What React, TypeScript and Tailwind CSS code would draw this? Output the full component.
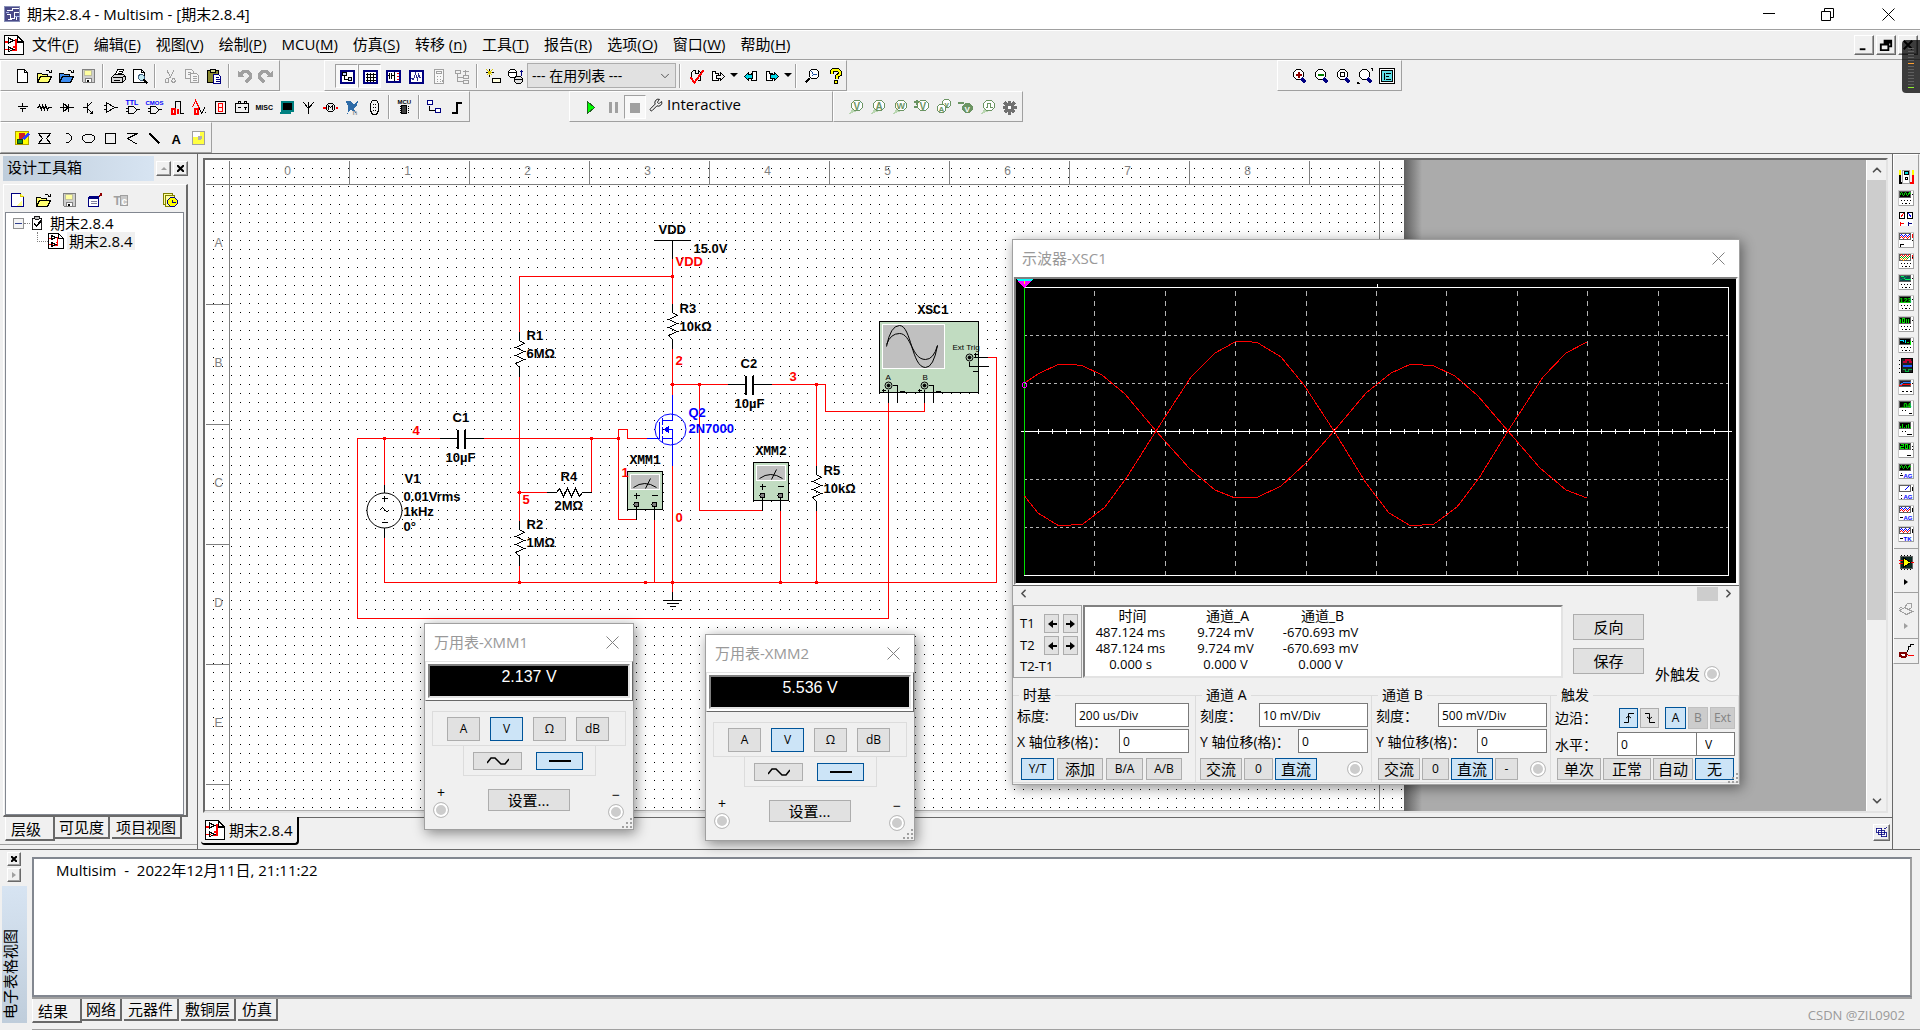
import type { ReactNode } from "react";
import { ChevronDown, ChevronLeft, ChevronRight, ChevronUp, Wrench } from "lucide-react";
import clsx from "clsx";

type PathShape = [d: string, stroke?: string, fill?: string, width?: number];
type TextShape = { text: string; x: number; y: number; fill: string; size: number };
type Shape = PathShape | TextShape;

const K = "#000000";
const G = "#a0a0a0";
const N = "#000080";
const R = "#ff0000";
const PROBE = "#6b9463";

const magnifier = (inner: Shape[]): Shape[] => [
  ["M5 1H9L12 4V8L9 11H5L2 8V4Z", K, "#ffffff"],
  ["M10 10L14 14", N, "none", 3],
  ...inner,
];

const probe = (label: string): Shape[] => [
  ["M1 15L6 8L8 12Z", "none", "#b9d6b1"],
  ["M7 1H12L15 4V8L12 11H7L4 8V4Z", PROBE, "#ffffff"],
  { text: label, x: 6, y: 10, fill: PROBE, size: 10 },
];

const folder = (fill: string): Shape[] => [
  ["M1 14V5H5L6 6H11V8", K, fill],
  ["M1 14L4 8H15L12 14Z", K, fill],
  ["M9 3L10 2H12L14 4M15 1V4H12", K],
];

const instrument = (screen: string, waves: PathShape[], dots: string, label?: Shape): Shape[] => [
  ["M0 0H14V14H0Z", "none", "#ffffff"],
  ["M15 0V15H0", G],
  ["M0 15V0H15", "#c8c8c8"],
  ["M1 1H12V7H1Z", "#606060", screen],
  ...waves,
  [dots, K],
  ...(label ? [label] : []),
];

const DOTS = "M2 10H3M5 10H6M8 10H9M11 10H12M3 13H4M6 13H8M10 13H11M14 3V4";
const ZIG = "M1 5L3 2L5 5L7 2L9 5L11 2L12 4";
const BLUE_WAVE = "M1 4L3 2L5 4L7 2L9 4L11 2";
const RED_WAVE = "M1 6L3 4L5 6L7 4L9 6L11 4";

const ICONS: Record<string, Shape[]> = {
  app: [
    ["M0 0H15V15H0Z", "#8890b8", "#4a4a88"],
    ["M2 4H8V2H14M2 8H6V12H10V6H14M3 13H7M12 13V9", "#ffffff"],
    ["M1 6H4M10 10H15", "#a8b8e8"],
  ],
  sheet: [
    ["M0 0H10L15 5V15H0Z", K, "#ffffff"],
    ["M10 0V5H15", K],
    ["M0 5H3M0 11H4M7 9H9V3M9 9V12H6", R],
    ["M3 2V6L7 4ZM3 9V13L7 11Z", K],
  ],
  new: [["M3 1H10L13 4V14H3Z", K, "#ffffff"], ["M10 1V4H13", K]],
  open: folder("#ffff70"),
  openBlue: folder("#3c8cf0"),
  save: [
    ["M2 1H14V14H3L2 13Z", "#808080", "#d0d0d0"],
    ["M4 2H11V7H4Z", "#c0c0a0", "#ffffa0"],
    ["M5 10H11V14H5Z", "#808080", "#ffffff"],
    ["M7 11V13", K, "none", 2],
  ],
  print: [
    ["M5 6L7 1H13L11 6", K, "#ffffff"],
    ["M1 9L4 6H13L15 8V11L12 14H1Z", K, "#d8d8d8"],
    ["M2 9H12L15 7M12 9V14M3 12H9M8 3H11M7 5H10", K],
  ],
  preview: [
    ["M1 1H9L12 4V14H1Z", K, "#ffffff"],
    ["M9 1V4H12", K],
    ["M7 6H10L12 8V10L10 12H8L6 10V8Z", "#406080", "#c0e8f0"],
    ["M11 11L15 15", K, "none", 2],
  ],
  cut: [["M5 1V3L9 10M11 1V3L7 10", G], ["M4 10H6V14H3V11ZM10 10H12L13 13L11 14L9 13Z", G]],
  copy: [
    ["M1 1H7L9 3V10H1Z", G, "#f4f4f4"],
    ["M6 5H12L14 7V14H6Z", G, "#f4f4f4"],
    ["M3 4H6M3 6H5M8 8H12M8 10H12M8 12H12", G],
  ],
  paste: [
    ["M1 2H12V14H1Z", K, "#8a8a30"],
    ["M4 1H9V4H4Z", K, "#d8d890"],
    ["M7 6H12L14 8V15H7Z", N, "#ffffff"],
    ["M9 9H12M9 11H13M9 13H13", N],
  ],
  undo: [["M1 2V8H7Z", "none", G], ["M4 6L7 3H11L14 6V9L9 14", G, "none", 3]],
  redo: [["M14 2V8H8Z", "none", G], ["M11 6L8 3H4L1 6V9L6 14", G, "none", 3]],
  hierarchy: [
    ["M1 2H14V14H1Z", N, "#ffffff", 2],
    ["M3 4H7V7H3ZM9 9H12V12H9Z", K, "#c8d8ff"],
    ["M5 7V11H9", K],
  ],
  grid: [["M1 2H14V14H1Z", N, "#ffffff", 2], ["M3 6H13M3 9H13M3 12H13M5 4V13M8 4V13M11 4V13", K]],
  netlist: [
    ["M1 2H14V13H1Z", N, "#ffffff", 2],
    ["M2 7H4M4 4V10M6 4V10M6 7H8M9 3V12", K],
    ["M11 5H13M11 8H13M11 11H13", R],
  ],
  grapher: [["M1 2H14V14H1Z", N, "#ffffff", 2], ["M3 10L5 11L7 5L9 11L10 6L12 10", "#303090"]],
  calc: [
    ["M3 1H12V15H3Z", G, "#f8f8f8"],
    ["M5 3H10V5H5Z", G],
    ["M5 8H6M8 8H9M11 8H12M5 11H6M8 11H9M5 13H6M8 13H9M11 11V13", G],
  ],
  tree: [["M1 2H6V5H1ZM9 7H14V10H9ZM9 12H14V15H9ZM3 5V13H9M3 9H9M8 3H14M11 1V6", G]],
  createPart: [
    ["M4 0V8M0 4H8M1 1L7 7M7 1L1 7", "#d8c800"],
    ["M4 0V2M0 4H2M6 4H8M4 6V8", K],
    ["M7 10H15V14H7Z", K, "#ffffe0"],
  ],
  database: [
    ["M2 1H6L8 3V7L6 9H2L0 7V3Z", K, "#ffffff"],
    ["M0 4H8", K],
    ["M8 8H12L14 10V13L12 15H8L6 13V10Z", K, "#e0e0e0"],
    ["M6 11H14", K],
    ["M13 7V2M11 4L13 2L15 4", N],
  ],
  erc: [["M3 11V4L5 2H7V5H10V2L12 4V12H9", K], ["M2 9L6 14L15 2", R, "none", 2]],
  exportOut: [["M1 3H4V5H7V12H1Z", K, "#ffffff"], ["M5 7H9V4L13 8L9 12V10H5Z", K, "#f0f0f0"]],
  backAnnotate: [["M10 3H14V12H9V5H10Z", K, "#ffffff"], ["M10 6H6V4L2 8L6 12V10H10Z", K, "#00d8e8"]],
  forwardAnnotate: [["M1 3H4V5H7V12H1Z", K, "#ffffff"], ["M5 6H9V4L13 8L9 12V10H5Z", K, "#00d8e8"]],
  find: [
    ["M7 1H12L14 3V8L12 10H7L5 8V3Z", K, "#ffffff"],
    ["M7 3L9 6L7 8M9 6H12", "#2050a0"],
    ["M5 10L1 14", K, "none", 2],
  ],
  help: [
    ["M4 5V3L6 1H10L12 3V6L9 8V10", K, "none", 4],
    ["M4 5V3L6 1H10L12 3V6L9 8V10", "#ffff00", "none", 2],
    ["M7 12H10V15H7Z", K, "#ffff00"],
  ],
  zoomIn: magnifier([["M7 3V9M4 6H10", "#900000", "none", 2]]),
  zoomOut: magnifier([["M4 6H10", "#008000", "none", 2]]),
  zoomArea: magnifier([["M5 4H9V8H5Z", K]]),
  zoomFit: magnifier([["M13 0H15V2M0 13V15H2", K, K]]),
  fullScreen: [
    ["M0 0H15V15H0Z", K, "#ffffff"],
    ["M2 2H13V13H2Z", K, "#60e0e8"],
    ["M5 4V11M6 5H11M6 8H9M6 11H11", K],
  ],
  source: [["M3 7H13M5 9H11M8 3V7M8 9V12", K]],
  resistor: [["M0 8H2L3 6L5 10L6 6L8 10L9 6L11 10L12 8H15", K]],
  diode: [["M1 8H15M5 4V12M10 4V12M5 4L10 8L5 12", K]],
  transistor: [["M2 8H7M7 3V13M7 7L11 3M7 9L12 14M12 11V14H9", K]],
  opamp: [["M4 3V13L12 8ZM1 6H4M1 10H4M12 8H15", K]],
  ttl: [{ text: "TTL", x: 1, y: 5, fill: "#0000ff", size: 7 }, ["M4 7H9L12 10V11L9 14H4ZM1 9H4M1 12H4M12 10H15", K]],
  cmos: [{ text: "CMOS", x: -1, y: 5, fill: "#0000ff", size: 6 }, ["M4 7H9L12 10V11L9 14H4ZM1 9H4M1 12H4M12 10H15", K]],
  digital: [["M3 9H6V14H3ZM9 9V14", R, "none", 2], ["M7 8V2H12V14M12 14H15", K]],
  mixed: [["M2 8L5 1L9 9", R], ["M4 9H7V14H4Z", R, "none", 2], ["M9 9L11 14L14 9V7M14 13H15", K]],
  indicator: [["M3 2H13V14H3Z", K, "#fff0f0"], ["M6 4H10V8H6ZM6 8H10V12H6Z", R]],
  power: [["M1 4H14V13H1ZM4 2H6V4H4ZM10 2H12V4H10ZM3 8H6M9 8H12M11 7V10", K]],
  misc: [{ text: "MISC", x: -1, y: 10, fill: K, size: 7 }],
  peripheral: [["M3 2H14V11H3Z", "#008080", K, 2], ["M1 13H12", "#008080", "none", 2]],
  rf: [["M8 2V14M8 9L3 3M8 9L13 3", K]],
  motor: [["M6 4H10L12 6V10L10 12H6L4 10V6Z", K], ["M0 8H3M13 8H15", R, "none", 2], ["M6 10V6L8 8L10 6V10", K]],
  ni: [["M1 1L6 2L9 5L14 1L12 7L9 9L11 13L6 10L3 14L4 8Z", "none", "#2e6ca8"], { text: "n", x: 8, y: 15, fill: G, size: 8 }],
  connector: [["M6 1H10L12 4V11L10 15H6L4 11V4ZM7 4V5M9 4V5M7 7V8M9 7V8M7 10V11M9 10V11", K]],
  mcu: [
    { text: "MCU", x: 1, y: 4, fill: K, size: 6 },
    ["M5 6H10V14H5Z", K, "#404040"],
    ["M3 7H4M3 9H4M3 11H4M3 13H4M11 7H12M11 9H12M11 11H12M11 13H12", K],
  ],
  hierBlock: [["M1 1H6V5H1ZM9 9H14V13H9Z", N, "#ffffff"], ["M3 6V11H8", K]],
  bus: [["M3 13H8V3H13", K, "none", 2]],
  play: [["M4 2L11 8L4 14Z", "#206020", "#00ff00"]],
  pause: [["M4 3H6V13H4ZM10 3H12V13H10Z", G, G]],
  stop: [["M3 4H12V13H3Z", G, G]],
  probeV: probe("V"),
  probeA: probe("A"),
  probeW: [...probe(""), { text: "W", x: 5, y: 9, fill: PROBE, size: 9 }],
  probeDiff: [["M0 2H6M3 0V5M0 7H6", PROBE, "none", 2], ...probe("V").slice(1)],
  probeVA: [
    ["M9 0H13L15 2V6L13 8H9L7 6V2Z", PROBE, "#ffffff"],
    ["M4 5H8L10 7V11L8 13H4L2 11V7Z", PROBE, "#ffffff"],
    { text: "A", x: 3, y: 12, fill: PROBE, size: 8 },
    { text: "v", x: 9, y: 7, fill: PROBE, size: 8 },
  ],
  probeRef: [["M0 3H6", PROBE, "none", 2], ["M8 4H12L15 7V10L12 13H8L5 10V7Z", PROBE, PROBE], { text: "V", x: 7, y: 12, fill: "#ffffff", size: 8 }],
  probeDigital: [...probe(""), ["M6 8H8V4H11V8H13", PROBE]],
  gear: [
    ["M8 1V15M1 8H15M3 3L13 13M13 3L3 13", "#707070", "none", 3],
    ["M5 4H11L12 8L11 12H5L4 8Z", "none", "#707070"],
    ["M7 7H9V9H7Z", "#ffffff", "#ffffff"],
  ],
  annotate: [
    ["M1 1H14V14H1Z", "#b0a000", "#ffff00"],
    ["M4 2H10V8H4Z", "none", "#d02020"],
    ["M9 9L14 3", "#3040ff", "none", 3],
    ["M3 9H8V13H3Z", "#104010", "#109030"],
  ],
  polyShape: [["M2 3H14L10 8L14 13H2L6 8Z", K]],
  arc: [["M7 3H10L13 6V9L10 12H7", K]],
  ellipse: [["M5 4H11L14 6V9L11 12H5L2 9V6Z", K]],
  rect: [["M3 3H13V13H3Z", K]],
  polyline: [["M2 3H13L3 8L13 14", K]],
  line: [["M3 3L13 13", K, "none", 2]],
  text: [{ text: "A", x: 3, y: 13, fill: K, size: 13 }],
  note: [["M2 1H14V14H2Z", G, "#ffff40"], ["M2 1H9V6H2Z", "none", "#ffffff"], ["M7 7H11M9 5V9", "#b0b0b0", "none", 3]],
  projNew: [["M2 1H11L14 4V14H2Z", N, "#ffffff"], ["M11 1V4H14", "#d8c800", "#ffff60"], ["M12 8V13H7Z", "none", "#ffff90"]],
  closeSheet: [["M1 5H11V14H1Z", N, "#ffffff"], ["M1 5H11", N, "none", 3], ["M3 9H9M3 11H9", "#8080a0"], ["M11 5L14 1M12 1H14V3", "#900000"]],
  rename: [{ text: "T", x: 0, y: 12, fill: G, size: 12 }, ["M7 3H14V13H7Z", G, "#c8c8c8"], { text: "c", x: 8, y: 12, fill: "#ffffff", size: 10 }],
  history: [
    ["M1 1H10V12H1Z", "#808000", "#ffffa0"],
    ["M3 3H12V14H3Z", "#808000", "#ffffa0"],
    ["M8 5H12L15 8V11L12 14H8L5 11V8Z", N, "#ffff00"],
    ["M10 7V10H13", N],
  ],
  clipboard: [["M2 2H13V15H2Z", K, "#ffffff"], ["M5 0H10V3H5Z", K, "#c0c0c0"], ["M4 8L7 11L12 5", K, "none", 2]],
  cascade: [["M1 2H8V7H1ZM4 5H11V10H4ZM7 8H14V13H7Z", N, "#ffffff"], ["M10 4L14 1", N]],
  multimeter: [
    ["M1 0V5M14 0V5", "#ffff00", "none", 2],
    ["M1 5V13H4", K, "none", 2],
    ["M14 5V13H11", R, "none", 2],
    ["M4 1H11V14H4Z", G, "#ffffff"],
    ["M6 2H10V5H6Z", K, "#00e0e0"],
    ["M7 8H9V10H7Z", K],
  ],
  functionGen: instrument(K, [[ZIG, "#00d000"]], DOTS),
  wattmeter: [
    ["M0 0H14V14H0Z", "none", "#ffffff"],
    ["M1 7V1H6V7ZM9 7V1H14V7Z", K, "#ffffff"],
    ["M2 6L5 2", R],
    ["M10 2L13 6", "#0000ff"],
    ["M1 12H5M2 10V14", R],
    ["M9 12H13M10 10V14", N],
  ],
  scope2: instrument("#ffffff", [[BLUE_WAVE, "#0000ff"], [RED_WAVE, R], ["M14 1V5", R]], "M1 12H5M2 11V14M14 7V8"),
  scope4: instrument("#ffffff", [["M1 3L3 1L5 3L7 1L9 3L11 1", R], ["M1 5L3 3L5 5L7 3L9 5L11 3", "#00b000"], ["M1 7L3 5L5 7L7 5L9 7", "#ff9000"], ["M14 1V5", R]], DOTS),
  bode: instrument("#104848", [["M2 2H5L7 5H12", "#00ff60"], ["M2 5L9 2", "#008060"]], DOTS),
  freq: instrument(K, [], DOTS, { text: "123", x: 1, y: 7, fill: "#00e000", size: 7 }),
  wordGen: instrument(K, [["M2 2V6M4 2H6V6H4ZM8 2V6M10 2V6", "#00e000"]], DOTS),
  logicConv: instrument(K, [["M1 3H4L6 4M7 2V5", "#00e0ff"], ["M8 5H10M12 3V7", "#00e000"]], DOTS),
  logicAn: [
    ["M3 0H14V14H3Z", K, "#202020"],
    ["M4 3H7V1H11V3H13", "#c00030", "none", 2],
    ["M4 7H13", "#2060ff", "none", 2],
    ["M4 11H7V13H10V11H13", "#00b040"],
    ["M1 1V2M1 5V6M1 9V10M1 13V14", K],
  ],
  iv: instrument("#202030", [["M1 6L5 3H12", "#3080ff"], ["M1 6L6 5H12", R]], "M3 12H5M7 12H9M11 12H13M14 3V4"),
  distortion: instrument(K, [], "M3 10H4M6 10H7M10 13H13", { text: ".04", x: 3, y: 7, fill: "#00e000", size: 7 }),
  spectrum: instrument(K, [["M2 4V6M4 2V6M6 5V6M8 3V6M10 2V6M12 5V6", "#00e000"]], "M3 10H4M6 10H7M8 13H13"),
  network: instrument(K, [["M2 2H5V4H2V6H5M7 2H9V6H7ZM11 2V6", "#00e000"]], "M8 13H12M14 3V4M14 6V7"),
  agGen: instrument(K, [[ZIG, "#00d000"]], "M2 10H3M1 12H4", { text: "AG", x: 5, y: 14, fill: "#0000ff", size: 6 }),
  agMeter: instrument("#ffffff", [["M6 6L10 2", "#0000ff"]], "M3 10V11M3 13V14M14 2V6", { text: "AG", x: 5, y: 14, fill: "#0000ff", size: 6 }),
  agScope: instrument("#ffffff", [[BLUE_WAVE, "#0000ff"], [RED_WAVE, R]], "M1 12H4M14 2V6", { text: "AG", x: 5, y: 14, fill: "#0000ff", size: 6 }),
  tkScope: instrument("#ffffff", [[BLUE_WAVE, "#0000ff"], [RED_WAVE, R]], "M1 12H4M14 2V6", { text: "TK", x: 5, y: 14, fill: "#0000ff", size: 6 }),
  labview: [
    ["M2 1H14V13H2Z", "#606060", "#082820"],
    ["M0 5H4M0 8H4", R],
    ["M5 2V12L12 7Z", K, "#ffff00"],
    ["M12 7H15", R],
    ["M2 14H3M5 14H6M8 14H9M11 14H12M2 0H3M5 0H6M8 0H9M11 0H12", K],
  ],
  elvis: [["M1 9L6 6L14 10L8 13ZM6 6L9 2H13V6L10 8M1 7L4 5", G]],
  currentProbe: [["M3 9H7L8 11L7 13H3L1 12V10Z", "#800000", "#ffffff", 2], ["M8 9L10 6V3H12V1H15", K], ["M9 12H15", R]],
};

const Icon = ({ name, size = 16 }: { name: string; size?: number }) => (
  <svg viewBox="0 0 16 16" width={size} height={size} shapeRendering="crispEdges" className="shrink-0 overflow-visible" aria-hidden="true">
    <g transform="translate(.5 .5)">
      {ICONS[name].map((s, i) =>
        Array.isArray(s) ? (
          <path key={i} d={s[0]} stroke={s[1] ?? "none"} fill={s[2] ?? "none"} strokeWidth={s[3] ?? 1} />
        ) : (
          <text key={i} x={s.x} y={s.y} fill={s.fill} fontSize={s.size} fontWeight="700" fontFamily="Liberation Sans, sans-serif">
            {s.text}
          </text>
        )
      )}
    </g>
  </svg>
);

const Toolbar = ({ children, className }: { children: ReactNode; className?: string }) => (
  <div className={clsx("flex h-[31px] items-center border border-t-white border-l-white border-r-[#a0a0a0] border-b-[#a0a0a0] pl-2.5", className)}>
    {children}
  </div>
);

const Tool = ({ name, wide, pressed }: { name: string; wide?: boolean; pressed?: boolean }) => (
  <button
    aria-label={name}
    className={clsx(
      "flex h-6 shrink-0 items-center justify-center",
      wide ? "w-[23px]" : "w-[22px]",
      pressed && "border border-t-[#a0a0a0] border-l-[#a0a0a0] border-r-white border-b-white bg-[#f8f8f8]"
    )}
  >
    <Icon name={name} />
  </button>
);

const Sep = () => <span className="mx-[3px] h-6 w-0.5 shrink-0 border-l border-r border-l-[#a0a0a0] border-r-white" />;

const Caret = () => (
  <svg width="8" height="5" viewBox="0 0 8 5" className="shrink-0" aria-hidden="true">
    <path d="M0 0H8L4 4Z" />
  </svg>
);

const MENUS: [string, string][] = [
  ["文件(", "F"], ["编辑(", "E"], ["视图(", "V"], ["绘制(", "P"], ["MCU(", "M"], ["仿真(", "S"],
  ["转移 (", "n"], ["工具(", "T"], ["报告(", "R"], ["选项(", "O"], ["窗口(", "W"], ["帮助(", "H"],
];

const PLACE_TOOLS = [
  "source", "resistor", "diode", "transistor", "opamp", "ttl", "cmos", "digital", "mixed",
  "indicator", "power", "misc", "peripheral", "rf", "motor", "ni", "connector",
];

const INSTRUMENTS = [
  "multimeter", "functionGen", "wattmeter", "scope2", "scope4", "bode", "freq", "wordGen", "logicConv",
  "logicAn", "iv", "distortion", "spectrum", "network", "agGen", "agMeter", "agScope", "tkScope",
];

const RAISED = "border border-t-white border-l-white border-r-[#696969] border-b-[#696969] shadow-[inset_-1px_-1px_0_#a0a0a0]";

const TitleBar = () => (
  <header className="flex h-[30px] shrink-0 items-center border-b border-[#a0a0a0] bg-white pb-px pl-1">
    <Icon name="app" />
    <h1 className="ml-[7px] text-[15px]">期末2.8.4 - Multisim - [期末2.8.4]</h1>
    <div className="ml-auto flex">
      <button aria-label="最小化" className="flex h-7 w-[58px] items-center justify-center">
        <svg width="12" height="12" viewBox="0 0 12 12"><path d="M0 5.5H12" stroke="#000" /></svg>
      </button>
      <button aria-label="还原" className="flex h-7 w-[58px] items-center justify-center">
        <svg width="13" height="13" viewBox="0 0 13 13" fill="none" stroke="#000"><path d="M.5 3.5H9.5V12.5H.5ZM3.5 3V.5H12.5V9.5H10" /></svg>
      </button>
      <button aria-label="关闭" className="flex h-7 w-16 items-center justify-center">
        <svg width="13" height="13" viewBox="0 0 13 13" stroke="#000"><path d="M.5 .5L12.5 12.5M12.5 .5L.5 12.5" /></svg>
      </button>
    </div>
  </header>
);

const MenuBar = () => (
  <nav className="flex h-[30px] shrink-0 items-center border-t border-b border-t-white border-b-[#a0a0a0] pl-1 text-[15px]">
    <Icon name="sheet" size={20} />
    <div className="ml-2 flex gap-[15px] pb-0.5">
      {MENUS.map(([label, key]) => (
        <button key={label} className="leading-5 whitespace-pre">
          {label}<u className="underline-offset-2">{key}</u>)
        </button>
      ))}
    </div>
    <div className="ml-auto flex gap-0.5 pr-0.5">
      {["M4 13H10", "M6 4H14V10H12M3 8H11V14H3ZM6 6H14", "M4 4L13 13M13 4L4 13"].map((d) => (
        <button key={d} aria-label="文档窗口" className={clsx("flex h-5 w-5 items-center justify-center", RAISED)}>
          <svg width="16" height="16" viewBox="0 0 17 17" fill="none" stroke="#000" strokeWidth="2"><path d={d} /></svg>
        </button>
      ))}
    </div>
  </nav>
);

const Toolbars = () => (
  <div className="shrink-0 border-b border-[#696969]">
    <div className="flex">
      <Toolbar className="pr-0.5">
        {["new", "open", "openBlue", "save"].map((n) => <Tool key={n} name={n} />)}
        <Sep />
        {["print", "preview"].map((n) => <Tool key={n} name={n} />)}
        <Sep />
        {["cut", "copy", "paste"].map((n) => <Tool key={n} name={n} />)}
        <Sep />
        {["undo", "redo"].map((n) => <Tool key={n} name={n} />)}
      </Toolbar>
      <Toolbar className="ml-11">
        <Tool name="hierarchy" wide pressed />
        <Tool name="grid" wide pressed />
        {["netlist", "grapher", "calc", "tree"].map((n) => <Tool key={n} name={n} wide />)}
        <Sep />
        {["createPart", "database"].map((n) => <Tool key={n} name={n} wide />)}
        <div className="relative">
          <select aria-label="在用列表" className="h-[25px] w-[149px] appearance-none border border-[#adadad] bg-[#e1e1e1] px-1 text-[14px]">
            <option>--- 在用列表 ---</option>
          </select>
          <ChevronDown size={14} strokeWidth={1.5} className="pointer-events-none absolute top-1.5 right-1 text-[#404040]" />
        </div>
        <Sep />
        <Tool name="erc" wide />
        <Tool name="exportOut" wide />
        <Caret />
        <Tool name="backAnnotate" wide />
        <Tool name="forwardAnnotate" wide />
        <Caret />
        <Sep />
        <Tool name="find" wide />
        <Tool name="help" wide />
      </Toolbar>
      <Toolbar className="mr-[518px] ml-auto pr-[3px]">
        {["zoomIn", "zoomOut", "zoomArea", "zoomFit", "fullScreen"].map((n) => <Tool key={n} name={n} />)}
      </Toolbar>
    </div>
    <div className="flex">
      <Toolbar className="pr-0.5">
        {PLACE_TOOLS.map((n) => <Tool key={n} name={n} />)}
        <Sep />
        <Tool name="mcu" />
        <Sep />
        <Tool name="hierBlock" />
        <Tool name="bus" />
      </Toolbar>
      <Toolbar className="ml-[99px] w-[264px]">
        <Tool name="play" />
        <Tool name="pause" />
        <Tool name="stop" pressed />
        <button className="ml-[3px] flex items-center gap-1 pb-1 text-[15px]">
          <Wrench size={14} strokeWidth={1.5} />
          Interactive
        </button>
      </Toolbar>
      <Toolbar className="pr-0.5">
        {["probeV", "probeA", "probeW", "probeDiff", "probeVA", "probeRef", "probeDigital", "gear"].map((n) => <Tool key={n} name={n} />)}
      </Toolbar>
    </div>
    <div className="flex">
      <Toolbar className="pr-0.5">
        {["annotate", "polyShape", "arc", "ellipse", "rect", "polyline", "line", "text", "note"].map((n) => <Tool key={n} name={n} />)}
      </Toolbar>
    </div>
  </div>
);

const Tabs = ({ items }: { items: string[] }) => (
  <div className="flex items-start text-[15px]">
    {items.map((t, i) => (
      <button
        key={t}
        className={clsx(
          "border-r-2 border-b-2 border-[#696969] whitespace-nowrap",
          i === 0 ? "h-6 border-l border-l-white pr-3 pl-[5px] leading-6" : "mr-0.5 h-[22px] px-1 leading-5"
        )}
      >
        {t}
      </button>
    ))}
  </div>
);

const DesignToolbox = () => (
  <aside className="flex w-[198px] shrink-0 flex-col border-r border-r-[#696969]">
    <div className="flex flex-1 flex-col border-b border-[#a0a0a0] pt-0.5">
      <div className="flex items-center gap-0.5 pl-[3px]">
        <h2 className="h-[25px] w-[151px] bg-gradient-to-r from-[#bfcddb] to-[#d7e4f2] pl-1 text-[15px] leading-[22px]">设计工具箱</h2>
        <button aria-label="收起" className={clsx("flex size-[15px] items-center justify-center", RAISED)}>
          <svg width="6" height="4" viewBox="0 0 6 4"><path d="M0 3L3 0L6 3Z" fill="#a0a0a0" /></svg>
        </button>
        <button aria-label="关闭面板" className={clsx("flex size-[15px] items-center justify-center", RAISED)}>
          <svg width="7" height="7" viewBox="0 0 7 7" stroke="#000" strokeWidth="2"><path d="M0 0L7 7M7 0L0 7" /></svg>
        </button>
      </div>
      <div className="mt-[3px] ml-[3px] flex w-[185px] flex-1 flex-col border-t border-r-2 border-b-2 border-l border-t-white border-l-white border-r-[#696969] border-b-[#696969]">
        <div className="flex h-[27px] items-center gap-2.5 pt-0.5 pr-2 pl-[5px]">
          {["projNew", "open", "save", "closeSheet", "rename"].map((n) => (
            <button key={n} aria-label={n}><Icon name={n} /></button>
          ))}
          <button aria-label="history" className="ml-auto"><Icon name="history" /></button>
        </div>
        <ul className="mr-0.5 ml-px flex-1 border border-[#828790] bg-white pt-px text-[15px] leading-[18px]">
          <li>
            <div className="flex items-center pl-[7px]">
              <span className="flex size-[11px] items-center justify-center border border-[#919191] bg-[#f4f4f4]"><span className="h-px w-[7px] bg-[#304090]" /></span>
              <span className="w-1.5 border-t border-dotted border-[#808080]" />
              <Icon name="clipboard" size={14} />
              <span className="ml-1.5">期末2.8.4</span>
            </div>
            <ul>
              <li className="flex items-center pl-[31px]">
                <span className="-mt-2 h-2.5 w-[11px] border-b border-l border-dotted border-[#808080]" />
                <Icon name="sheet" />
                <span className="ml-[3px] bg-[#f0f0f0] px-0.5">期末2.8.4</span>
              </li>
            </ul>
          </li>
        </ul>
      </div>
      <div className="h-[27px] pl-[5px]"><Tabs items={["层级", "可见度", "项目视图"]} /></div>
    </div>
    <div className="h-1" />
  </aside>
);

const zigzag = (x: number, y: number) =>
  `M${x} ${y - 9}V${y}L${x + 5} ${y + 3}L${x - 4} ${y + 7}L${x + 5} ${y + 11}L${x - 4} ${y + 15}L${x + 5} ${y + 19}L${x - 4} ${y + 23}L${x} ${y + 27}V${y + 36}`;

const WIRES = [
  "M672 258V303M672 348V394M672 465V591",
  "M672 276H519V331M519 375V520M519 564V582",
  "M672 384H727M771 384H825V411H924V402",
  "M699 384V510H762M780 510V582",
  "M816 384V465M816 510V582",
  "M439 438H357V618H888V402",
  "M483 438H618M618 519V429H627V438H646",
  "M591 438V492M519 492H546M618 519H636M654 519V582",
  "M384 438V484M384 537V582H996V357H987",
];

const JUNCTIONS = [
  [672, 276], [672, 384], [699, 384], [816, 384], [384, 438], [591, 438], [618, 438],
  [519, 492], [519, 582], [645, 582], [672, 582], [780, 582], [816, 582],
];

const LABELS: [number, number, string, string?][] = [
  [658, 233, "VDD"], [693, 252, "15.0V"], [675, 265, "VDD", R], [679, 312, "R3"], [679, 330, "10kΩ"],
  [675, 364, "2", R], [740, 367, "C2"], [734, 407, "10µF"], [789, 380, "3", R],
  [688, 416, "Q2", "#0000ff"], [688, 432, "2N7000", "#0000ff"], [823, 474, "R5"], [823, 492, "10kΩ"],
  [526, 339, "R1"], [526, 357, "6MΩ"], [452, 421, "C1"], [445, 461, "10µF"], [412, 434, "4", R],
  [404, 482, "V1"], [403, 500, "0.01Vrms"], [403, 515, "1kHz"], [403, 530, "0°"],
  [560, 480, "R4"], [554, 509, "2MΩ"], [522, 503, "5", R], [526, 528, "R2"], [526, 546, "1MΩ"],
  [621, 476, "1", R], [675, 521, "0", R],
];

const Meter = ({ x, y, name }: { x: number; y: number; name: string }) => (
  <g transform={`translate(${x} ${y})`}>
    <text x="2" y="-8" fill="#000" fontFamily="Liberation Mono, monospace" fontWeight="700" fontSize="13">{name}</text>
    <rect width="35" height="38" fill="#c1dcc1" stroke="#000" />
    <rect x="3" y="3" width="29" height="15" fill="#c0c0c0" stroke="#fff" />
    <path d="M6 16Q17 8 29 16M18 17L23 7" fill="none" stroke="#000" shapeRendering="auto" />
    <path d="M6 24H12M9 21V27M24 24H30M9 35V48M27 35V48" stroke="#000" />
    <circle cx="9" cy="33" r="2.5" fill="#808080" stroke="#000" />
    <circle cx="27" cy="33" r="2.5" fill="#808080" stroke="#000" />
  </g>
);

const Terminal = ({ x, y }: { x: number; y: number }) => (
  <g shapeRendering="auto" stroke="#000">
    <circle cx={x} cy={y} r="3.5" fill="none" />
    <circle cx={x} cy={y} r="1.5" fill="#000" />
  </g>
);

const Schematic = () => (
  <svg viewBox="205 160 1199 650" className="block h-[650px] w-[1199px] shrink-0 bg-white" shapeRendering="crispEdges" fill="none">
    <defs>
      <pattern id="dots" x="213" y="168" width="9" height="9" patternUnits="userSpaceOnUse">
        <rect width="1" height="1" fill="#000" />
      </pattern>
    </defs>
    <rect x="205" y="160" width="1199" height="650" fill="url(#dots)" />
    <g transform="translate(.5 .5)">
      <path d="M205 184H1403M229 160V810M1379 160V810" stroke="#808080" />
      {[349, 469, 589, 709, 829, 949, 1069, 1189, 1309].map((x) => <path key={x} d={`M${x} 160V184`} stroke="#808080" />)}
      {[304, 424, 544, 664, 784].map((y) => <path key={y} d={`M205 ${y}H229M1379 ${y}H1403`} stroke="#808080" />)}
      <g fill="#808080" fontFamily="Liberation Sans, sans-serif" fontSize="12" textAnchor="middle">
        {[0, 1, 2, 3, 4, 5, 6, 7, 8].map((n) => <text key={n} x={287 + n * 120} y="174">{n}</text>)}
        {["A", "B", "C", "D", "E"].map((c, i) => <text key={c} x="218" y={246 + i * 120}>{c}</text>)}
      </g>
      {WIRES.map((d) => <path key={d} d={d} stroke={R} />)}
      <g stroke="#000">
        <path d="M654 240H690M672 240V258M672 591V600M663 600H681M666 603H678M669 606H675" />
        <path d={zigzag(672, 312)} />
        <path d={zigzag(519, 340)} />
        <path d={zigzag(519, 529)} />
        <path d={zigzag(816, 474)} />
        <path d="M546 492H556L559 488L563 496L567 488L571 496L575 488L579 496L582 492H591" />
        <path d="M727 384H745M753 384H771M439 438H457M465 438H483" />
        <path d="M745 375V394M752 375V394M457 429V448M464 429V448" strokeWidth="2" />
        <circle cx="384" cy="510" r="17.5" shapeRendering="auto" />
        <path d="M384 484V492M384 528V537M381 498H387M384 495V501M381 522H387M379 510L382 507L386 511L389 510" />
      </g>
      <g stroke="#0000ff">
        <circle cx="670" cy="429" r="15.5" shapeRendering="auto" />
        <path d="M672 394V420H662M646 438H659V421M662 417V424M662 426V433M662 435V442M662 438H672M663 429H672V465" />
        <path d="M664 429L668 426V432Z" fill="#0000ff" />
      </g>
      <Meter x={627} y={471} name="XMM1" />
      <Meter x={753} y={462} name="XMM2" />
      <rect x="879" y="321" width="99" height="71" fill="#c1dcc1" stroke="#000" />
      <rect x="882" y="324" width="62" height="44" fill="#c0c0c0" stroke="#fff" />
      <g shapeRendering="auto" stroke="#000">
        <path d="M886 346Q890 325 899 325C911 325 911 367 925 367Q933 367 937 345" />
        <path d="M886 344Q890 333 899 333C911 333 911 359 925 359Q933 359 937 345" />
      </g>
      <path d="M888 389V402M892 385H897V402M924 389V402M928 385H933V402M973 357H987M969 361V366H988M881 390H885M883 388V392M899 391H904M917 390H921M919 388V392M935 391H940M973 354H977M975 352V356M972 371H977" stroke="#000" />
      <Terminal x={888} y={385} />
      <Terminal x={924} y={385} />
      <Terminal x={969} y={357} />
      <g fill="#000" fontFamily="Liberation Sans, sans-serif" fontSize="8">
        <text x="952" y="349">Ext Trig</text>
        <text x="885" y="379">A</text>
        <text x="922" y="379">B</text>
        <text x="917" y="313" fontFamily="Liberation Mono, monospace" fontWeight="700" fontSize="13">XSC1</text>
      </g>
      {JUNCTIONS.map(([x, y]) => <circle key={`${x}-${y}`} cx={x} cy={y} r="2" fill={R} />)}
      <g fontFamily="Liberation Sans, sans-serif" fontSize="13" fontWeight="700">
        {LABELS.map(([x, y, t, c]) => <text key={`${x}-${y}`} x={x} y={y} fill={c ?? K}>{t}</text>)}
      </g>
    </g>
  </svg>
);

const Workspace = () => (
  <main className="flex min-w-0 flex-1 flex-col border-r border-[#696969]">
    <div className="mt-1 mr-1 ml-[5px] flex min-h-0 flex-1 border-2 border-t-[#696969] border-l-[#696969] border-r-[#e3e3e3] border-b-[#e3e3e3] bg-[#ababab]">
      <div className="flex min-w-0 flex-1 overflow-hidden">
        <Schematic />
        <div className="w-[18px] bg-gradient-to-r from-[#606060] to-[#ababab]" />
      </div>
      <div className="flex w-5 flex-col items-center border-l border-white bg-[#f0f0f0] text-[#505050]">
        <ChevronUp size={14} strokeWidth={3} className="my-[3px]" />
        <div className="h-[440px] w-full bg-[#cdcdcd]" />
        <ChevronDown size={14} strokeWidth={3} className="mt-auto mb-[3px]" />
      </div>
    </div>
    <div className="mt-1 flex h-8 shrink-0">
      <button className="ml-[3px] flex h-7 items-center gap-1 rounded-b border-r-2 border-b-2 border-black pr-1 pl-1 text-[15px]">
        <Icon name="sheet" size={20} />
        期末2.8.4
      </button>
      <div className="flex flex-1 items-center justify-end border-t border-[#696969] pr-0.5 pb-0.5">
        <button aria-label="cascade" className={clsx("p-px", RAISED)}><Icon name="cascade" size={13} /></button>
      </div>
    </div>
  </main>
);

const InstrumentStrip = () => (
  <aside className="w-[27px] shrink-0">
    <div className="flex w-[26px] flex-col items-center border border-t-white border-l-white border-r-[#a0a0a0] border-b-[#a0a0a0] pt-[11px] pb-1">
      {INSTRUMENTS.map((n) => (
        <button key={n} aria-label={n} className="flex h-[21px] items-center"><Icon name={n} /></button>
      ))}
      <hr className="mt-1 w-full border-t border-[#a0a0a0]" />
      <button aria-label="labview" className="mt-1.5 h-4"><Icon name="labview" /></button>
      <svg width="4" height="6" viewBox="0 0 4 6" className="mt-2 mb-[7px]"><path d="M0 0L4 3L0 6Z" /></svg>
      <hr className="w-full border-t border-[#a0a0a0]" />
      <button aria-label="elvis" className="mt-2 h-4"><Icon name="elvis" /></button>
      <svg width="4" height="6" viewBox="0 0 4 6" className="mt-1.5 mb-[9px]"><path d="M0 0L4 3L0 6Z" fill="#a0a0a0" /></svg>
      <hr className="w-full border-t border-[#a0a0a0]" />
      <button aria-label="currentProbe" className="mt-1 h-4"><Icon name="currentProbe" /></button>
    </div>
  </aside>
);

const SpreadsheetView = () => (
  <section className="flex h-[181px] shrink-0 border-t border-[#696969]">
    <div className="flex w-8 flex-col pt-0.5">
      <button aria-label="关闭视图" className={clsx("ml-[7px] flex size-3.5 items-center justify-center", RAISED)}>
        <svg width="6" height="6" viewBox="0 0 6 6" stroke="#000" strokeWidth="2"><path d="M0 0L6 6M6 0L0 6" /></svg>
      </button>
      <button aria-label="展开视图" className={clsx("mt-0.5 ml-[7px] flex size-3.5 items-center justify-center", RAISED)}>
        <svg width="4" height="6" viewBox="0 0 4 6"><path d="M0 0L4 3L0 6Z" fill="#a0a0a0" /></svg>
      </button>
      <h2 className="mt-1 mb-[7px] ml-0.5 w-[25px] flex-1 rotate-180 bg-gradient-to-t from-[#d7e4f2] to-[#bfcddb] pt-1 text-[15px] leading-4 [text-orientation:sideways] [writing-mode:vertical-rl]">
        电子表格视图
      </h2>
    </div>
    <div className="relative flex min-w-0 flex-1 flex-col border-b border-[#a0a0a0] pt-[7px] pr-2">
      <div className="h-[140px] border-2 border-t-[#828790] border-l-[#828790] border-r-[#a0a0a0] border-b-[#828790] bg-white pl-[22px] text-[15px] whitespace-pre">
        Multisim  -  2022年12月11日, 21:11:22
      </div>
      <div className="border-t-2 border-[#a0a0a0]"><Tabs items={["结果", "网络", "元器件", "敷铜层", "仿真"]} /></div>
      <span className="absolute right-[15px] bottom-1 text-[13px] text-[#9a9a9a]">CSDN @ZIL0902</span>
    </div>
  </section>
);

const FloatingWindow = ({ title, className, children }: { title: string; className: string; children: ReactNode }) => (
  <section aria-label={title} className={clsx("absolute border border-[#a0a0a0] bg-[#f0f0f0] shadow-[2px_3px_12px_rgba(0,0,0,0.45)]", className)}>
    <header className="flex h-[37px] items-center justify-between bg-white pr-[14px] pb-px pl-[9px] text-[15px] text-[#999999]">
      {title}
      <button aria-label={`关闭 ${title}`}>
        <svg width="13" height="13" viewBox="0 0 13 13" stroke="#808080"><path d="M.5 .5L12.5 12.5M12.5 .5L.5 12.5" /></svg>
      </button>
    </header>
    {children}
    <svg width="11" height="11" viewBox="0 0 11 11" className="absolute right-0 bottom-0" fill="#a0a0a0" aria-hidden="true">
      <path d="M8 0h2v2h-2zM8 4h2v2h-2zM8 8h2v2h-2zM4 4h2v2h-2zM4 8h2v2h-2zM0 8h2v2h-2z" />
    </svg>
  </section>
);

const Btn = ({ children, on, off, className }: { children: ReactNode; on?: boolean; off?: boolean; className?: string }) => (
  <button
    disabled={off}
    className={clsx(
      "flex shrink-0 items-center justify-center border whitespace-nowrap",
      on ? "border-[#005499] bg-[#cce4f7]" : off ? "border-[#bfbfbf] bg-[#cccccc] text-[#838383]" : "border-[#adadad] bg-[#e1e1e1]",
      className
    )}
  >
    {children}
  </button>
);

const Jack = ({ label }: { label: string }) => (
  <input type="radio" aria-label={label} disabled className="size-4 shrink-0 appearance-none rounded-full border border-[#bcbcbc] bg-[#cccccc] shadow-[inset_0_0_0_2px_#ffffff]" />
);

const Multimeter = ({ title, value, className }: { title: string; value: string; className: string }) => (
  <FloatingWindow title={title} className={clsx("w-[210px]", className)}>
    <div className="border border-t-[#e3e3e3] border-l-[#e3e3e3] border-r-[#696969] border-b-[#696969] bg-white p-0.5">
      <output className="block h-[34px] border-2 border-t-[#808080] border-l-[#808080] border-r-[#e3e3e3] border-b-[#e3e3e3] bg-black text-center font-['Liberation_Sans',sans-serif] text-base leading-[22px] text-white">{value}</output>
    </div>
    <div className="mx-[7px] mt-2.5 flex h-[35px] items-center justify-center gap-2.5 border border-[#dcdcdc] pr-0.5 text-[12px]">
      {["A", "V", "Ω", "dB"].map((m) => <Btn key={m} on={m === "V"} className="h-6 w-[33px]">{m}</Btn>)}
    </div>
    <div className="mx-auto flex h-[30px] w-[133px] items-center justify-center gap-3.5 border border-t-0 border-[#dcdcdc] pr-0.5">
      <Btn className="h-[18px] w-[49px]">
        <svg width="22" height="8" viewBox="0 0 22 8" fill="none" stroke="#000" strokeWidth="1.5"><path d="M0 6L4 1H8L14 7H18L22 2" /></svg>
      </Btn>
      <Btn on className="h-[18px] w-[47px]"><span className="h-0.5 w-[22px] bg-black" /></Btn>
    </div>
    <div className="flex h-[53px] items-start justify-between pt-2 pr-[9px] pl-2 text-[14px]">
      <div className="flex flex-col items-center"><span className="leading-[18px]">+</span><Jack label="正极" /></div>
      <Btn className="mt-[5px] h-[22px] w-[82px] text-[15px]">设置...</Btn>
      <div className="mt-0.5 flex flex-col items-center"><span className="leading-[18px]">−</span><Jack label="负极" /></div>
    </div>
  </FloatingWindow>
);

const TRACE_A =
  "8.5,104 22,95 43,85 54,85 67,87 86,96 109,115 140,152 173,189 199,211 219,219 242,218 265,207 291,183 318,152 350,114 375,94 395,85 418,87 439,97 462,117 492,152 524,189 550,211 571,219";
const TRACE_B =
  "8.5,217 22,234 43,247 67,245 89,228 111,198 140,152 175,98 199,74 219,63 230,62 242,64 265,78 288,106 318,152 350,204 373,234 395,247 418,245 441,228 463,199 492,152 527,98 550,74 571,63";

const ScopeScreen = () => (
  <svg viewBox="0 0 720 304" className="block w-full bg-black" fill="none" shapeRendering="crispEdges">
    <path d="M8 8.5H713M712.5 8V296.5H8M361 5V8" stroke="#fff" />
    {[78, 149, 219, 290, 360, 430, 501, 571, 642].map((x) => <path key={x} d={`M${x}.5 12V296`} stroke="#b4b4b4" strokeDasharray="5 5" />)}
    {[56, 104, 200, 248].map((y) => <path key={y} d={`M8 ${y}.5H712`} stroke="#b4b4b4" strokeDasharray="3 3" />)}
    <path d="M5 152.5H716" stroke="#fff" />
    <path d="M8 152.5H716" stroke="#fff" strokeWidth="5" strokeDasharray="1 13.08" />
    <path d="M8.5 0V296" stroke="#00e000" />
    <polyline points={TRACE_A} stroke={R} />
    <polyline points={TRACE_B} stroke={R} />
    <path d="M0 0H17L14 3H3Z" fill="#00ffff" />
    <path d="M2 2H15L8.5 9Z" fill="#ff00ff" />
    <path d="M8.5 2V5" stroke="#ffff00" />
    <circle cx="8.5" cy="106" r="2.5" stroke="#ff00ff" />
  </svg>
);

const READINGS = [
  ["487.124 ms", "9.724 mV", "-670.693 mV"],
  ["487.124 ms", "9.724 mV", "-670.693 mV"],
  ["0.000 s", "0.000 V", "0.000 V"],
];

const CursorButtons = () => (
  <div className="flex gap-1">
    {["M7 1L2 5L7 9V6H11V4H7Z", "M5 1L10 5L5 9V6H1V4H5Z"].map((d) => (
      <button key={d} aria-label="移动光标" className="flex h-[19px] w-[15px] items-center justify-center border border-[#adadad] bg-[#e1e1e1]">
        <svg width="12" height="10" viewBox="0 0 12 10" className="shrink-0"><path d={d} /></svg>
      </button>
    ))}
  </div>
);

const Field = ({ id, label, value, width }: { id: string; label: string; value: string; width: string }) => (
  <div className="flex h-6 items-center justify-between">
    <label htmlFor={id} className="text-[14px] whitespace-nowrap">{label}</label>
    <input id={id} defaultValue={value} className={clsx("h-6 border border-[#7a7a7a] bg-white px-[3px] text-[12px]", width)} />
  </div>
);

const Group = ({ title, children, className = "pr-[3px]" }: { title: string; children: ReactNode; className?: string }) => (
  <fieldset className={clsx("min-w-0 border border-l-0 border-[#dcdcdc] pb-0.5 pl-1", className)}>
    <legend className="ml-0.5 px-1 text-[14px] leading-4">{title}</legend>
    <div className="flex flex-col gap-0.5">{children}</div>
  </fieldset>
);

const Oscilloscope = () => (
  <FloatingWindow title="示波器-XSC1" className="top-[239px] left-[1012px] w-[728px]">
    <div className="mx-px border-2 border-t-[#808080] border-l-[#808080] border-r-white border-b-white"><ScopeScreen /></div>
    <div className="flex h-4 items-center justify-between border-t border-[#696969] px-1 text-[#505050]">
      <ChevronLeft size={13} strokeWidth={3} />
      <div className="flex items-center gap-1">
        <div className="h-3.5 w-[21px] bg-[#cdcdcd]" />
        <ChevronRight size={13} strokeWidth={3} />
      </div>
    </div>
    <div className="mt-1 flex h-[73px]">
      <div className="w-[69px] border border-[#a0a0a0] pt-2 pr-[3px] pl-1.5 text-[13px] leading-[18px]">
        <div className="flex items-start justify-between">T1<CursorButtons /></div>
        <div className="mt-[3px] flex items-start justify-between">T2<CursorButtons /></div>
        <div className="mt-0.5">T2-T1</div>
      </div>
      <div className="ml-px w-[480px] border-2 border-t-[#808080] border-l-[#808080] border-r-[#e3e3e3] border-b-[#e3e3e3] bg-white">
        <table className="w-[285px] table-fixed text-center text-[13px] leading-4">
          <thead>
            <tr className="text-[14px] leading-[17px]">{["时间", "通道_A", "通道_B"].map((h) => <th key={h} className="p-0 font-normal">{h}</th>)}</tr>
          </thead>
          <tbody>
            {READINGS.map((row, i) => (
              <tr key={i}>{row.map((c, j) => <td key={j} className="p-0 pr-1 whitespace-nowrap">{c}</td>)}</tr>
            ))}
          </tbody>
        </table>
      </div>
      <div className="mt-[9px] ml-2.5 flex flex-col gap-2 text-[15px]">
        <Btn className="h-[26px] w-[71px]">反向</Btn>
        <Btn className="h-[26px] w-[71px]">保存</Btn>
      </div>
      <label className="mt-[61px] ml-[11px] flex h-4 items-center gap-1 text-[15px] leading-4">外触发<Jack label="外触发" /></label>
    </div>
    <div className="mt-[9px] grid grid-cols-[183px_176px_179px_1fr] pb-px">
      <Group title="时基" className="pr-1.5">
        <Field id="tb-scale" label="标度:" value="200 us/Div" width="w-[114px]" />
        <Field id="tb-x" label="X 轴位移(格)：" value="0" width="w-[70px]" />
        <div className="mt-[3px] ml-1 flex gap-[3px] text-[12px]">
          <Btn on className="h-[22px] w-[33px]">Y/T</Btn>
          <Btn className="h-[22px] w-[46px] text-[15px]">添加</Btn>
          <Btn className="h-[22px] w-[37px]">B/A</Btn>
          <Btn className="h-[22px] w-[36px]">A/B</Btn>
        </div>
      </Group>
      <Group title="通道 A">
        <Field id="a-scale" label="刻度：" value="10 mV/Div" width="w-[109px]" />
        <Field id="a-y" label="Y 轴位移(格)：" value="0" width="w-[70px]" />
        <div className="mt-[3px] flex items-center gap-0.5 text-[15px]">
          <Btn className="h-[22px] w-[42px]">交流</Btn>
          <Btn className="h-[22px] w-[29px] text-[12px]">0</Btn>
          <Btn on className="h-[22px] w-[42px]">直流</Btn>
          <span className="mr-[5px] ml-auto flex"><Jack label="通道 A" /></span>
        </div>
      </Group>
      <Group title="通道 B">
        <Field id="b-scale" label="刻度：" value="500 mV/Div" width="w-[109px]" />
        <Field id="b-y" label="Y 轴位移(格)：" value="0" width="w-[70px]" />
        <div className="mt-[3px] flex items-center gap-0.5 pl-0.5 text-[15px]">
          <Btn className="h-[22px] w-[42px]">交流</Btn>
          <Btn className="h-[22px] w-[27px] text-[12px]">0</Btn>
          <Btn on className="h-[22px] w-[42px]">直流</Btn>
          <Btn className="h-[22px] w-[23px] text-[12px]">-</Btn>
          <span className="mr-px ml-auto flex"><Jack label="通道 B" /></span>
        </div>
      </Group>
      <Group title="触发">
        <div className="flex h-[27px] items-center pt-0.5 text-[12px]">
          <span className="mr-auto text-[14px]">边沿：</span>
          <Btn on className="h-5 w-[19px]">
            <svg width="10" height="12" viewBox="0 0 10 12" fill="none" stroke="#000"><path d="M0 10.5H4.5V1.5H10M2 6L4.5 4L7 6" /></svg>
          </Btn>
          <Btn className="mr-1.5 ml-0.5 h-5 w-[19px]">
            <svg width="10" height="12" viewBox="0 0 10 12" fill="none" stroke="#000"><path d="M0 1.5H4.5V10.5H10M2 5L4.5 7L7 5" /></svg>
          </Btn>
          <Btn on className="mr-0.5 h-[22px] w-[21px]">A</Btn>
          <Btn off className="mr-0.5 h-[22px] w-5">B</Btn>
          <Btn off className="h-[22px] w-[25px]">Ext</Btn>
        </div>
        <div className="flex h-6 items-center text-[12px]">
          <label htmlFor="trig" className="mr-auto text-[14px]">水平：</label>
          <input id="trig" defaultValue="0" className="h-6 w-20 border border-[#7a7a7a] bg-white px-[3px]" />
          <input aria-label="单位" defaultValue="V" className="h-6 w-[38px] border border-l-0 border-[#7a7a7a] bg-white px-2" />
        </div>
        <div className="flex gap-0.5 pl-0.5 text-[15px]">
          <Btn className="h-[22px] w-[44px]">单次</Btn>
          <Btn className="h-[22px] w-[48px]">正常</Btn>
          <Btn className="h-[22px] w-[40px]">自动</Btn>
          <Btn on className="h-[22px] w-[39px]">无</Btn>
        </div>
      </Group>
    </div>
  </FloatingWindow>
);

const LevelGadget = () => (
  <div className="absolute top-10 right-0 flex h-[53px] w-[18px] flex-col items-center justify-end gap-0.5 rounded-l bg-black/75 pb-[5px]" aria-hidden="true">
    {Array.from({ length: 14 }, (_, i) => (
      <span key={i} className={clsx("h-px w-1.5", i === 5 ? "bg-[#ffa030]" : i === 13 ? "bg-[#90f030]" : "bg-[#606060]")} />
    ))}
  </div>
);

export default function App() {
  return (
    <div className="relative flex h-screen flex-col overflow-hidden bg-[#f0f0f0] font-['Open_Sans','Noto_Sans_CJK_SC',sans-serif] text-black">
      <TitleBar />
      <MenuBar />
      <Toolbars />
      <div className="flex min-h-0 flex-1">
        <DesignToolbox />
        <Workspace />
        <InstrumentStrip />
      </div>
      <SpreadsheetView />
      <Multimeter title="万用表-XMM1" value="2.137 V" className="top-[623px] left-[424px]" />
      <Multimeter title="万用表-XMM2" value="5.536 V" className="top-[634px] left-[705px]" />
      <Oscilloscope />
      <LevelGadget />
    </div>
  );
}
